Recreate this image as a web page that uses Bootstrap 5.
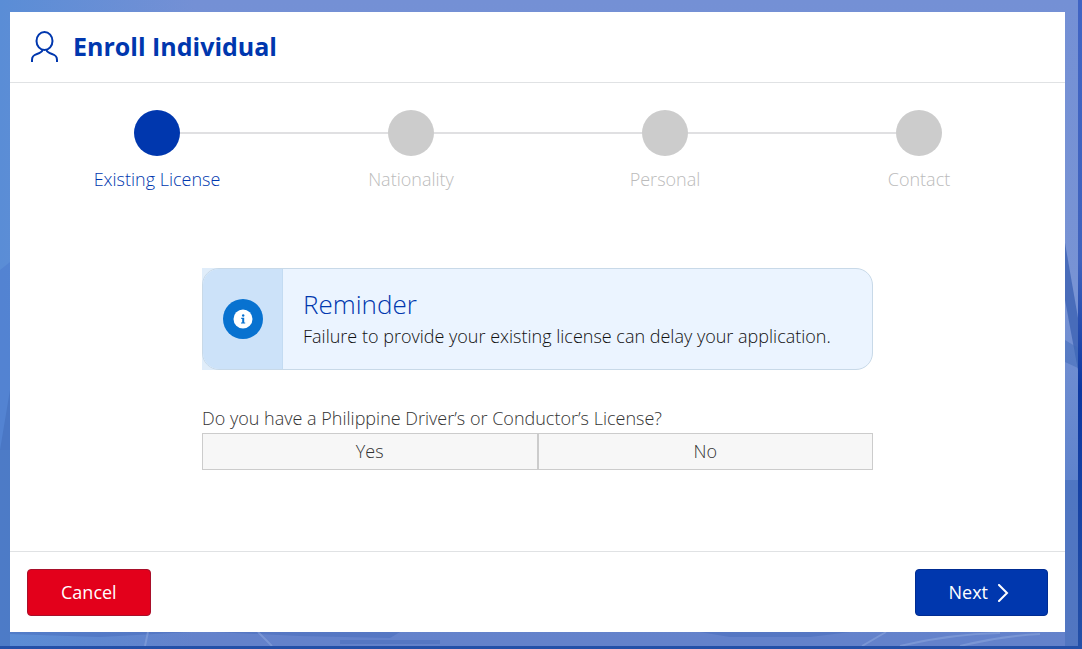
<!DOCTYPE html>
<html lang="en">
<head>
<meta charset="utf-8">
<meta name="viewport" content="width=device-width, initial-scale=1">
<title>Enroll Individual</title>
<link href="https://cdn.jsdelivr.net/npm/bootstrap@5.3.0/dist/css/bootstrap.min.css" rel="stylesheet">
<style>
  :root { --brand: #0037ae; }
  body {
    font-family: "Open Sans", "Noto Sans", sans-serif;
    font-size: 18px; font-weight: 300; line-height: 27px; color: #333;
    background: linear-gradient(#4064c4, #3f62bd 40%, #0c37a0 60%, #2450a8);
    min-height: 100vh; padding: 0 4px 3px 0;
  }
  .backdrop {
    min-height: calc(100vh - 3px); padding: 12px 13px 14px 10px; position: relative;
    background: linear-gradient(90deg, #5a8dd6, rgba(90,141,214,0) 18%), linear-gradient(#7490d5, #7893d4 45%, #5f83cc 75%, #6482cb);
  }
  .scenery { position: absolute; inset: 0; width: 100%; height: 100%; }
  .panel { position: relative; background: #fff; }
  .panel-head { padding: 19px 20px 20px; border-bottom: 1px solid #e0e2e4; }
  .panel-head h1 { font-size: 25px; line-height: 31px; font-weight: 700; color: var(--brand); margin: 0 0 0 14px; }
  .panel-body { padding: 27px 20px 24px; }
  .panel-foot { padding: 17px 17px 16px; border-top: 1px solid #e0e2e4; }
  .steps { margin: 0 -1px 0 0; }
  .step { position: relative; color: #bbb; }
  .step + .step::before {
    content: ""; position: absolute; top: 22px; right: 50%; width: 100%; height: 2px; background: #e0e0e2;
  }
  .dot { position: relative; z-index: 1; width: 46px; height: 46px; margin: 0 auto 10px; background: #ccc; }
  .step.current { color: var(--brand); }
  .step.current .dot { background: var(--brand); }
  .form-area { max-width: 671px; margin-top: 75px; }
  .reminder-back { background: linear-gradient(90deg, #e0edfa 20px, transparent 20px); }
  .reminder { background: #ebf4ff; border: 1px solid #c8d9e8; border-radius: 17px; overflow: hidden; color: #111; }
  .reminder-icon { width: 80px; background: #cce2f9; border-right: 1px solid #c3dbf2; }
  .reminder-text { padding: 20px 20px 19px; }
  .reminder h2 { font-size: 26px; line-height: 31px; font-weight: 300; color: var(--brand); margin: 0 0 3px; }
  .question { margin: 35px 0 1px; }
  .choice { border: 1px solid #ccc; background: #f7f7f7; color: #333; height: 37px; font-weight: 300; }
  .action { height: 47px; border-radius: 4px; color: #fff; font-size: 18px; padding: 0 33px; }
  .action-cancel { background: #e3001b; border-color: #a80f2a; }
  .action-next { background: var(--brand); border-color: #002c92; }
</style>
</head>
<body>
<div class="backdrop d-flex flex-column">
  <svg class="scenery" viewBox="0 0 1078 646" preserveAspectRatio="none" aria-hidden="true">
    <path d="M0 270 10 262V450H0z" fill="#4f7dce" opacity=".6"/>
    <path d="M0 450 10 390V646H0z" fill="#456fbc" opacity=".6"/>
    <path d="M1065 243 1078 318V370L1065 300z" fill="#4468b7" opacity=".9"/>
    <path d="M1065 340l13 8v20l-13-6zM1065 480H1078V646H1065z" fill="#4069b8" opacity=".5"/>
    <path d="M10 632H190L100 637 10 634zM215 632H400L390 638 300 636zM340 640h100v4h-100zM700 632h150l-40 5h-80z" fill="#486bbb" opacity=".5"/>
    <path d="M148 632l-3 14M258 632l14 14M862 646l24-14M900 646q50-12 100-13M960 646q40-10 80-12" fill="none" stroke="#8fa9e0" stroke-width="2" opacity=".5"/>
  </svg>
  <main class="panel d-flex flex-column flex-grow-1">
    <header class="panel-head d-flex align-items-center">
      <svg width="29" height="31" viewBox="0 0 29 31" fill="none" stroke="#0037ae" stroke-width="2" stroke-linejoin="round" aria-hidden="true"><ellipse cx="14.500" cy="10" rx="8" ry="9"/><path d="M2 31v-2c0-4 2-5 5-6 3-1 5-2 5.500-4M27 31v-2c0-4-2-5-5-6-3-1-5-2-5.500-4"/></svg>
      <h1>Enroll Individual</h1>
    </header>
    <div class="panel-body flex-grow-1">
      <ol class="steps d-flex list-unstyled text-center">
        <li class="col step current" aria-current="step"><div class="dot rounded-circle"></div>Existing License</li>
        <li class="col step"><div class="dot rounded-circle"></div>Nationality</li>
        <li class="col step"><div class="dot rounded-circle"></div>Personal</li>
        <li class="col step"><div class="dot rounded-circle"></div>Contact</li>
      </ol>
      <div class="form-area mx-auto">
        <div class="reminder-back">
          <section class="reminder d-flex">
            <div class="reminder-icon d-flex align-items-center justify-content-center flex-shrink-0">
              <svg width="40" height="40" viewBox="0 0 40 40" aria-hidden="true"><circle cx="20" cy="20" r="20" fill="#0872d0"/><circle cx="20" cy="20" r="9.500" fill="#fff"/><circle cx="20.200" cy="16.500" r="1.200" fill="#0872d0"/><path d="M18.200 18.800h3v4.700h1v1.100h-4.200v-1.100h1.200v-3.600h-1z" fill="#0872d0"/></svg>
            </div>
            <div class="reminder-text">
              <h2>Reminder</h2>
              <p class="mb-0">Failure to provide your existing license can delay your application.</p>
            </div>
          </section>
        </div>
        <div class="question" id="license-question">Do you have a Philippine Driver’s or Conductor’s License?</div>
        <div class="d-flex" role="group" aria-labelledby="license-question">
          <button type="button" class="choice w-50">Yes</button>
          <button type="button" class="choice w-50">No</button>
        </div>
      </div>
    </div>
    <footer class="panel-foot d-flex justify-content-between">
      <button type="button" class="btn action action-cancel">Cancel</button>
      <button type="button" class="btn action action-next d-flex align-items-center gap-2">Next
        <svg width="18" height="18" viewBox="0 0 18 18" fill="none" stroke="#fff" stroke-width="2" stroke-linecap="round" aria-hidden="true"><path d="M3 1l8 8-8 8"/></svg>
      </button>
    </footer>
  </main>
</div>
<script src="https://cdn.jsdelivr.net/npm/bootstrap@5.3.0/dist/js/bootstrap.bundle.min.js"></script>
</body>
</html>
